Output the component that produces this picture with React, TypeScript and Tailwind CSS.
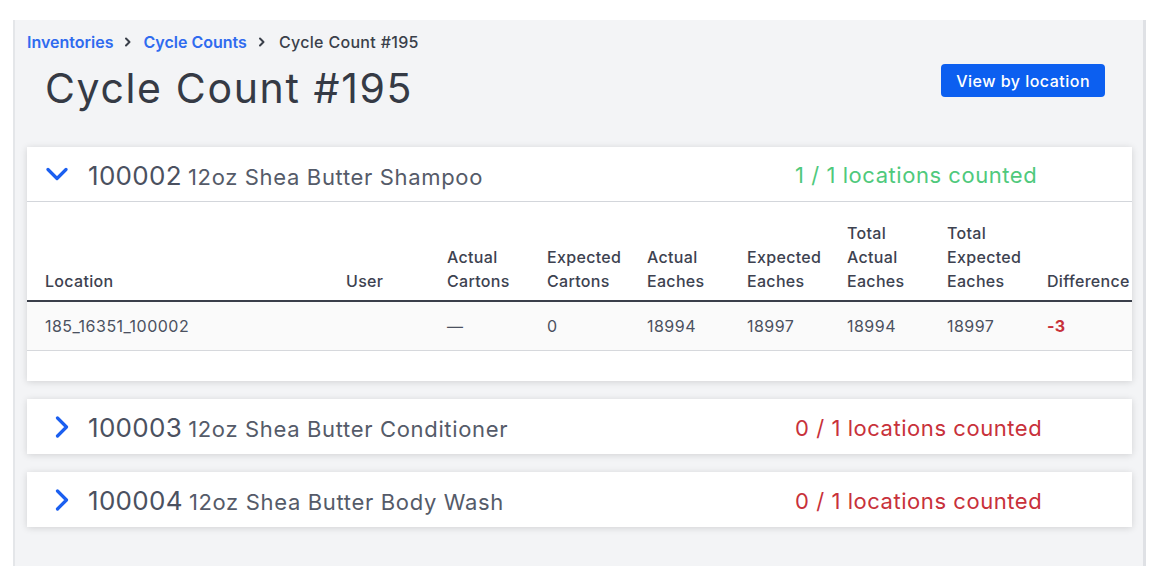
import React from "react";

type Item = {
  sku: string;
  name: string;
  counted: number;
  total: number;
  open?: boolean;
};

const items: Item[] = [
  { sku: "100002", name: "12oz Shea Butter Shampoo", counted: 1, total: 1, open: true },
  { sku: "100003", name: "12oz Shea Butter Conditioner", counted: 0, total: 1 },
  { sku: "100004", name: "12oz Shea Butter Body Wash", counted: 0, total: 1 },
];

const columns: string[][] = [
  ["Location"],
  ["User"],
  ["Actual", "Cartons"],
  ["Expected", "Cartons"],
  ["Actual", "Eaches"],
  ["Expected", "Eaches"],
  ["Total", "Actual", "Eaches"],
  ["Total", "Expected", "Eaches"],
  ["Difference"],
];

const row = ["185_16351_100002", "", "—", "0", "18994", "18997", "18994", "18997"];

const gridCols =
  "grid grid-cols-[301px_101px_100px_100px_100px_100px_100px_100px_120px] w-[1122px]";

function ChevronDown() {
  return (
    <svg width="22" height="14" viewBox="0 0 22 14" fill="none">
      <path d="M2 2.5 L11 11.5 L20 2.5" stroke="#1b5ff0" strokeWidth="3.2" strokeLinecap="round" strokeLinejoin="round" />
    </svg>
  );
}

function ChevronRight() {
  return (
    <svg width="14" height="22" viewBox="0 0 14 22" fill="none">
      <path d="M2.5 2 L11.5 11 L2.5 20" stroke="#1b5ff0" strokeWidth="3.2" strokeLinecap="round" strokeLinejoin="round" />
    </svg>
  );
}

function Crumb() {
  return (
    <svg width="10" height="10" viewBox="0 0 10 10" fill="none" className="mx-[10px]">
      <path d="M3 1.5 L6.5 5 L3 8.5" stroke="#3a3f4a" strokeWidth="2" strokeLinecap="round" strokeLinejoin="round" />
    </svg>
  );
}

function ItemCard({ item }: { item: Item }) {
  const done = item.counted === item.total;
  return (
    <div className="bg-white shadow-[0_1px_7px_rgba(0,0,0,0.14)] overflow-hidden">
      {/* Header */}
      <div className={`flex items-center h-[55px] pl-[19px] ${item.open ? "border-b border-[#d3d6db]" : ""}`}>
        <div className="w-[42px] flex items-center">
          {item.open ? (
            <ChevronDown />
          ) : (
            <span className="ml-[9px] flex">
              <ChevronRight />
            </span>
          )}
        </div>
        <div className="flex-1 flex items-baseline gap-[6px] text-[#4b5160] mt-[2px]">
          <span className="text-[26px]">{item.sku}</span>
          <span className="text-[22px] tracking-[0.03em] text-[#555b69]">{item.name}</span>
        </div>
        <div
          className={`w-[337px] shrink-0 text-[22px] mt-[3px] tracking-[0.025em] ${done ? "text-[#4fc97c]" : "text-[#c8313a]"}`}
        >
          {item.counted} / {item.total} locations counted
        </div>
      </div>

      {/* Table */}
      {item.open && (
        <div>
          <div className={`${gridCols} items-end pt-[19px] pb-[7px] border-b-2 border-[#3a3f4a]`}>
            {columns.map((lines, i) => (
              <div key={i} className="pl-[18px] text-[16px] leading-[24px] font-medium text-[#3d4250] whitespace-nowrap">
                {lines.map((l) => (
                  <div key={l}>{l}</div>
                ))}
              </div>
            ))}
          </div>
          <div className={`${gridCols} items-center h-[49px] bg-[#fafafa] border-b border-[#d6d8dc]`}>
            {row.map((v, i) => (
              <div key={i} className="pl-[18px] text-[16px] tracking-[0.03em] text-[#4b5160]">
                {v}
              </div>
            ))}
            <div className="pl-[18px] text-[16px] font-bold text-[#c8313a]">-3</div>
          </div>
          <div className="h-[30px]" />
        </div>
      )}
    </div>
  );
}

export default function App() {
  return (
    <div className="w-full h-[586px] bg-white pt-[20px] pl-[13px] tracking-[0.02em] font-['Inter','Noto_Sans',sans-serif]">
      <div className="w-[1133px] h-[546px] bg-[#f3f4f6] border-l-2 border-l-[#e4e6e9] border-r-[3px] border-r-[#dfe1e5] pl-[12px] pr-[11px] pt-[10px]">
        {/* Breadcrumb */}
        <nav className="flex items-center h-[24px] text-[16px] font-semibold tracking-normal">
          <span className="text-[#2f6bef]">Inventories</span>
          <Crumb />
          <span className="text-[#2f6bef]">Cycle Counts</span>
          <Crumb />
          <span className="ml-[2px] text-[#3a3f4a] font-medium tracking-[0.02em]">Cycle Count #195</span>
        </nav>

        {/* Title row */}
        <div className="flex items-start justify-between mt-[10px]">
          <h1 className="ml-[18px] text-[41px] leading-[48px] tracking-[0.04em] text-[#353a45]">Cycle Count #195</h1>
          <button className="mr-[27px] h-[33px] px-[15px] rounded-[4px] bg-[#0c5ff0] text-white text-[16px] font-medium tracking-[0.03em]">
            View by location
          </button>
        </div>

        {/* Items */}
        <div className="flex flex-col gap-[18px] mt-[35px]">
          {items.map((it) => (
            <ItemCard key={it.sku} item={it} />
          ))}
        </div>
      </div>
    </div>
  );
}
